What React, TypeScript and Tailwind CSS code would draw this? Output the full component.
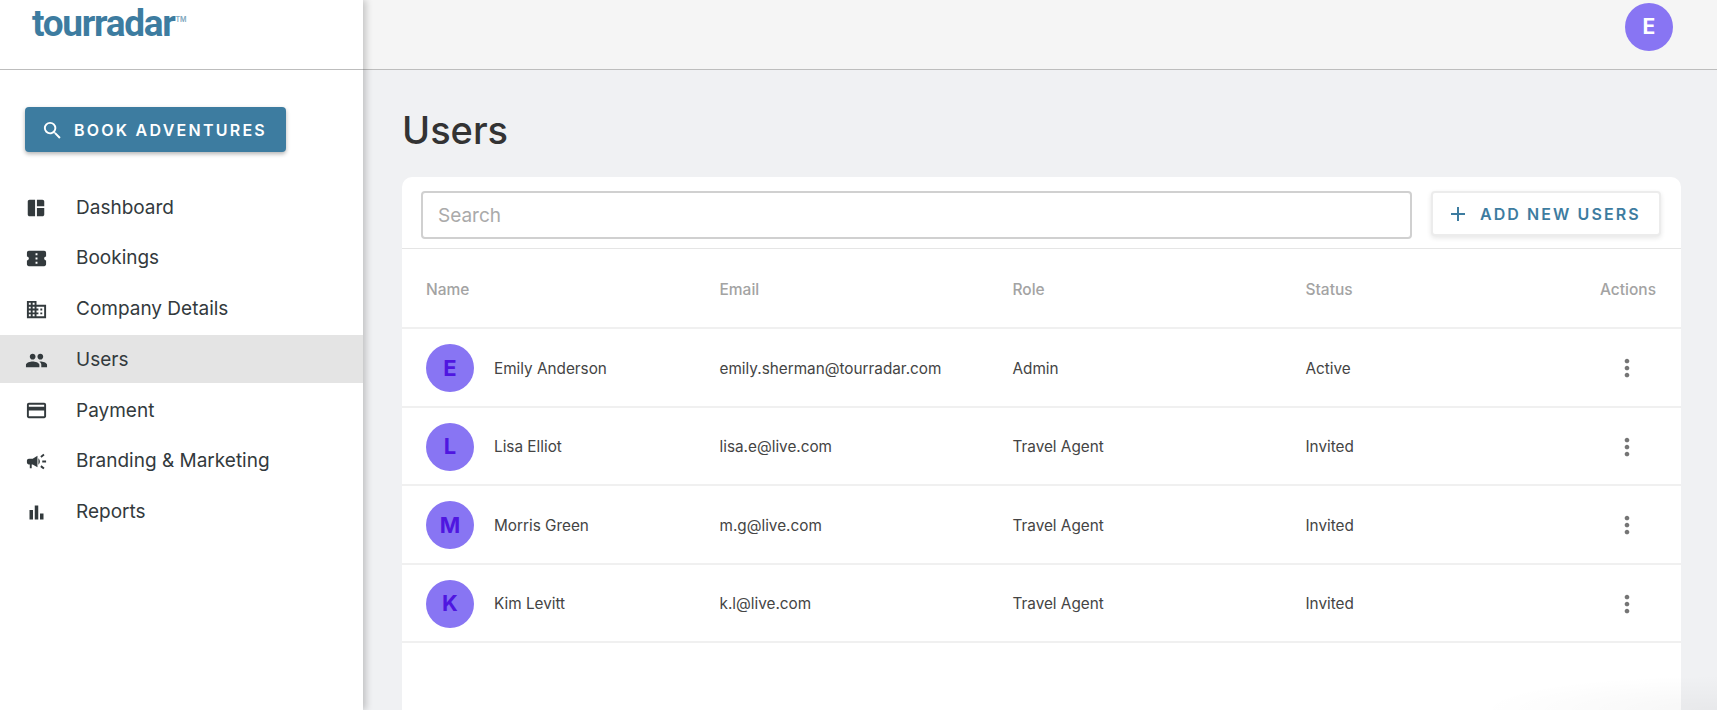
import React from 'react';
import {
    MdSpaceDashboard,
    MdConfirmationNumber,
    MdDomain,
    MdPeople,
    MdCreditCard,
    MdCampaign,
    MdBarChart,
    MdMoreVert,
    MdSearch,
    MdAdd,
} from 'react-icons/md';

const navItems = [
    { label: 'Dashboard', icon: MdSpaceDashboard, size: 'text-[22px]' },
    { label: 'Bookings', icon: MdConfirmationNumber, size: 'text-[23px]' },
    { label: 'Company Details', icon: MdDomain, size: 'text-[23px]' },
    { label: 'Users', icon: MdPeople, size: 'text-[23px]', active: true },
    { label: 'Payment', icon: MdCreditCard, size: 'text-[23px]' },
    { label: 'Branding & Marketing', icon: MdCampaign, size: 'text-[23px]' },
    { label: 'Reports', icon: MdBarChart, size: 'text-[21px]' },
];

const users = [
    { name: 'Emily Anderson', email: 'emily.sherman@tourradar.com', role: 'Admin', status: 'Active' },
    { name: 'Lisa Elliot', email: 'lisa.e@live.com', role: 'Travel Agent', status: 'Invited' },
    { name: 'Morris Green', email: 'm.g@live.com', role: 'Travel Agent', status: 'Invited' },
    { name: 'Kim Levitt', email: 'k.l@live.com', role: 'Travel Agent', status: 'Invited' },
];

const App: React.FC = () => {
    return (
        <div className="relative flex h-[710px] w-full overflow-hidden bg-[#f0f1f3] font-['Inter',sans-serif] text-[#333a3d]">
            {/* Sidebar */}
            <aside className="z-10 flex w-[363px] shrink-0 flex-col bg-white shadow-[3px_0_7px_rgba(0,0,0,0.2)]">
                <div className="h-[70px] shrink-0 border-b border-[#bdbdbd] pl-[32px] pt-[2px]">
                    <div className="flex items-start text-[#3d7ca0]">
                        <span className="font-['Roboto',sans-serif] text-[37px] leading-[44px] font-bold tracking-[-1.3px]">tourradar</span>
                        <span className="mt-[14px] ml-[1px] text-[7px] leading-none font-semibold text-[#7ea6bd]">TM</span>
                    </div>
                </div>

                <div className="px-[25px] pt-[37px]">
                    <button className="flex h-[45px] w-[261px] items-center rounded-[4px] bg-[#3d7ca0] pl-[16px] pt-[1px] text-[16px] font-semibold tracking-[0.14em] text-white shadow-[0_2px_4px_rgba(0,0,0,0.3)]">
                        <MdSearch className="mr-[10px] text-[23px]" />
                        BOOK ADVENTURES
                    </button>
                </div>

                <nav className="mt-[31px] flex flex-col gap-[2.7px]">
                    {navItems.map(item => {
                        const Icon = item.icon;
                        return (
                            <div
                                key={item.label}
                                className={`flex h-[48px] items-center pt-[2px] text-[19px] ${item.active ? 'bg-[#e4e4e4]' : ''}`}
                            >
                                <span className="flex w-[76px] shrink-0 justify-center pr-[4px]">
                                    <Icon className={item.size} />
                                </span>
                                {item.label}
                            </div>
                        );
                    })}
                </nav>
            </aside>

            {/* Main */}
            <div className="flex min-w-0 flex-1 flex-col">
                <header className="flex h-[70px] shrink-0 justify-end border-b border-[#bdbdbd] bg-[#f5f5f5] pr-[44px] pt-[3px]">
                    <div className="flex h-[48px] w-[48px] items-center justify-center rounded-full bg-[#8875f3] text-[21px] font-bold text-white">
                        E
                    </div>
                </header>

                <main className="flex min-h-0 flex-1 flex-col pl-[39px] pr-[36px]">
                    <h1 className="pt-[36px] pb-[23px] text-[38px] leading-[48px] font-medium text-[#333333]">Users</h1>

                    <section className="flex-1 rounded-t-[10px] bg-white">
                        {/* Toolbar */}
                        <div className="flex h-[72px] gap-[19px] border-b border-[#e5e5e5] pl-[19px] pr-[20px] pt-[14px]">
                            <div className="flex h-[48px] flex-1 items-center rounded-[4px] border-2 border-[#d0d0d0] pl-[15px] pt-[3px] text-[19px] text-[#aaaaaa]">
                                Search
                            </div>
                            <button className="flex h-[45px] w-[230px] items-center rounded-[4px] border-2 border-[#ececec] bg-white pl-[13px] text-[16px] font-semibold tracking-[0.13em] text-[#3d7ca0] shadow-[0_2px_5px_rgba(0,0,0,0.1)]">
                                <MdAdd className="mr-[10px] text-[24px]" />
                                ADD NEW USERS
                            </button>
                        </div>

                        {/* Table */}
                        <div className="grid h-[80px] grid-cols-[293.5px_293px_293px_1fr_auto] items-center border-b-2 border-[#f0f0f0] pl-[24px] pr-[25px] pt-[4px] text-[15.5px] font-medium text-[#a3a3a3]">
                            <span>Name</span>
                            <span>Email</span>
                            <span>Role</span>
                            <span>Status</span>
                            <span>Actions</span>
                        </div>

                        {users.map(user => (
                            <div
                                key={user.email}
                                className="grid h-[78.5px] grid-cols-[293.5px_293px_293px_1fr_auto] items-center border-b-2 border-[#f0f0f0] pl-[24px] pr-[40px] pt-[2px] text-[15.3px] text-[#444444]"
                            >
                                <span className="flex items-center gap-[20px]">
                                    <span className="flex h-[48px] w-[48px] items-center justify-center rounded-full bg-[#8875f3] text-[22px] font-bold text-[#4f16e0]">
                                        {user.name[0]}
                                    </span>
                                    <span className="pt-[2px]">{user.name}</span>
                                </span>
                                <span className="pt-[2px]">{user.email}</span>
                                <span className="pt-[2px]">{user.role}</span>
                                <span className="pt-[2px]">{user.status}</span>
                                <MdMoreVert className="text-[28px] text-[#757575]" />
                            </div>
                        ))}
                    </section>
                </main>
            </div>

            {/* faint shade in the bottom right corner */}
            <div className="pointer-events-none absolute right-0 bottom-0 h-[35px] w-[240px] bg-[radial-gradient(ellipse_at_bottom_right,rgba(0,0,0,0.035),rgba(0,0,0,0)_70%)]" />
        </div>
    );
};

export default App;
